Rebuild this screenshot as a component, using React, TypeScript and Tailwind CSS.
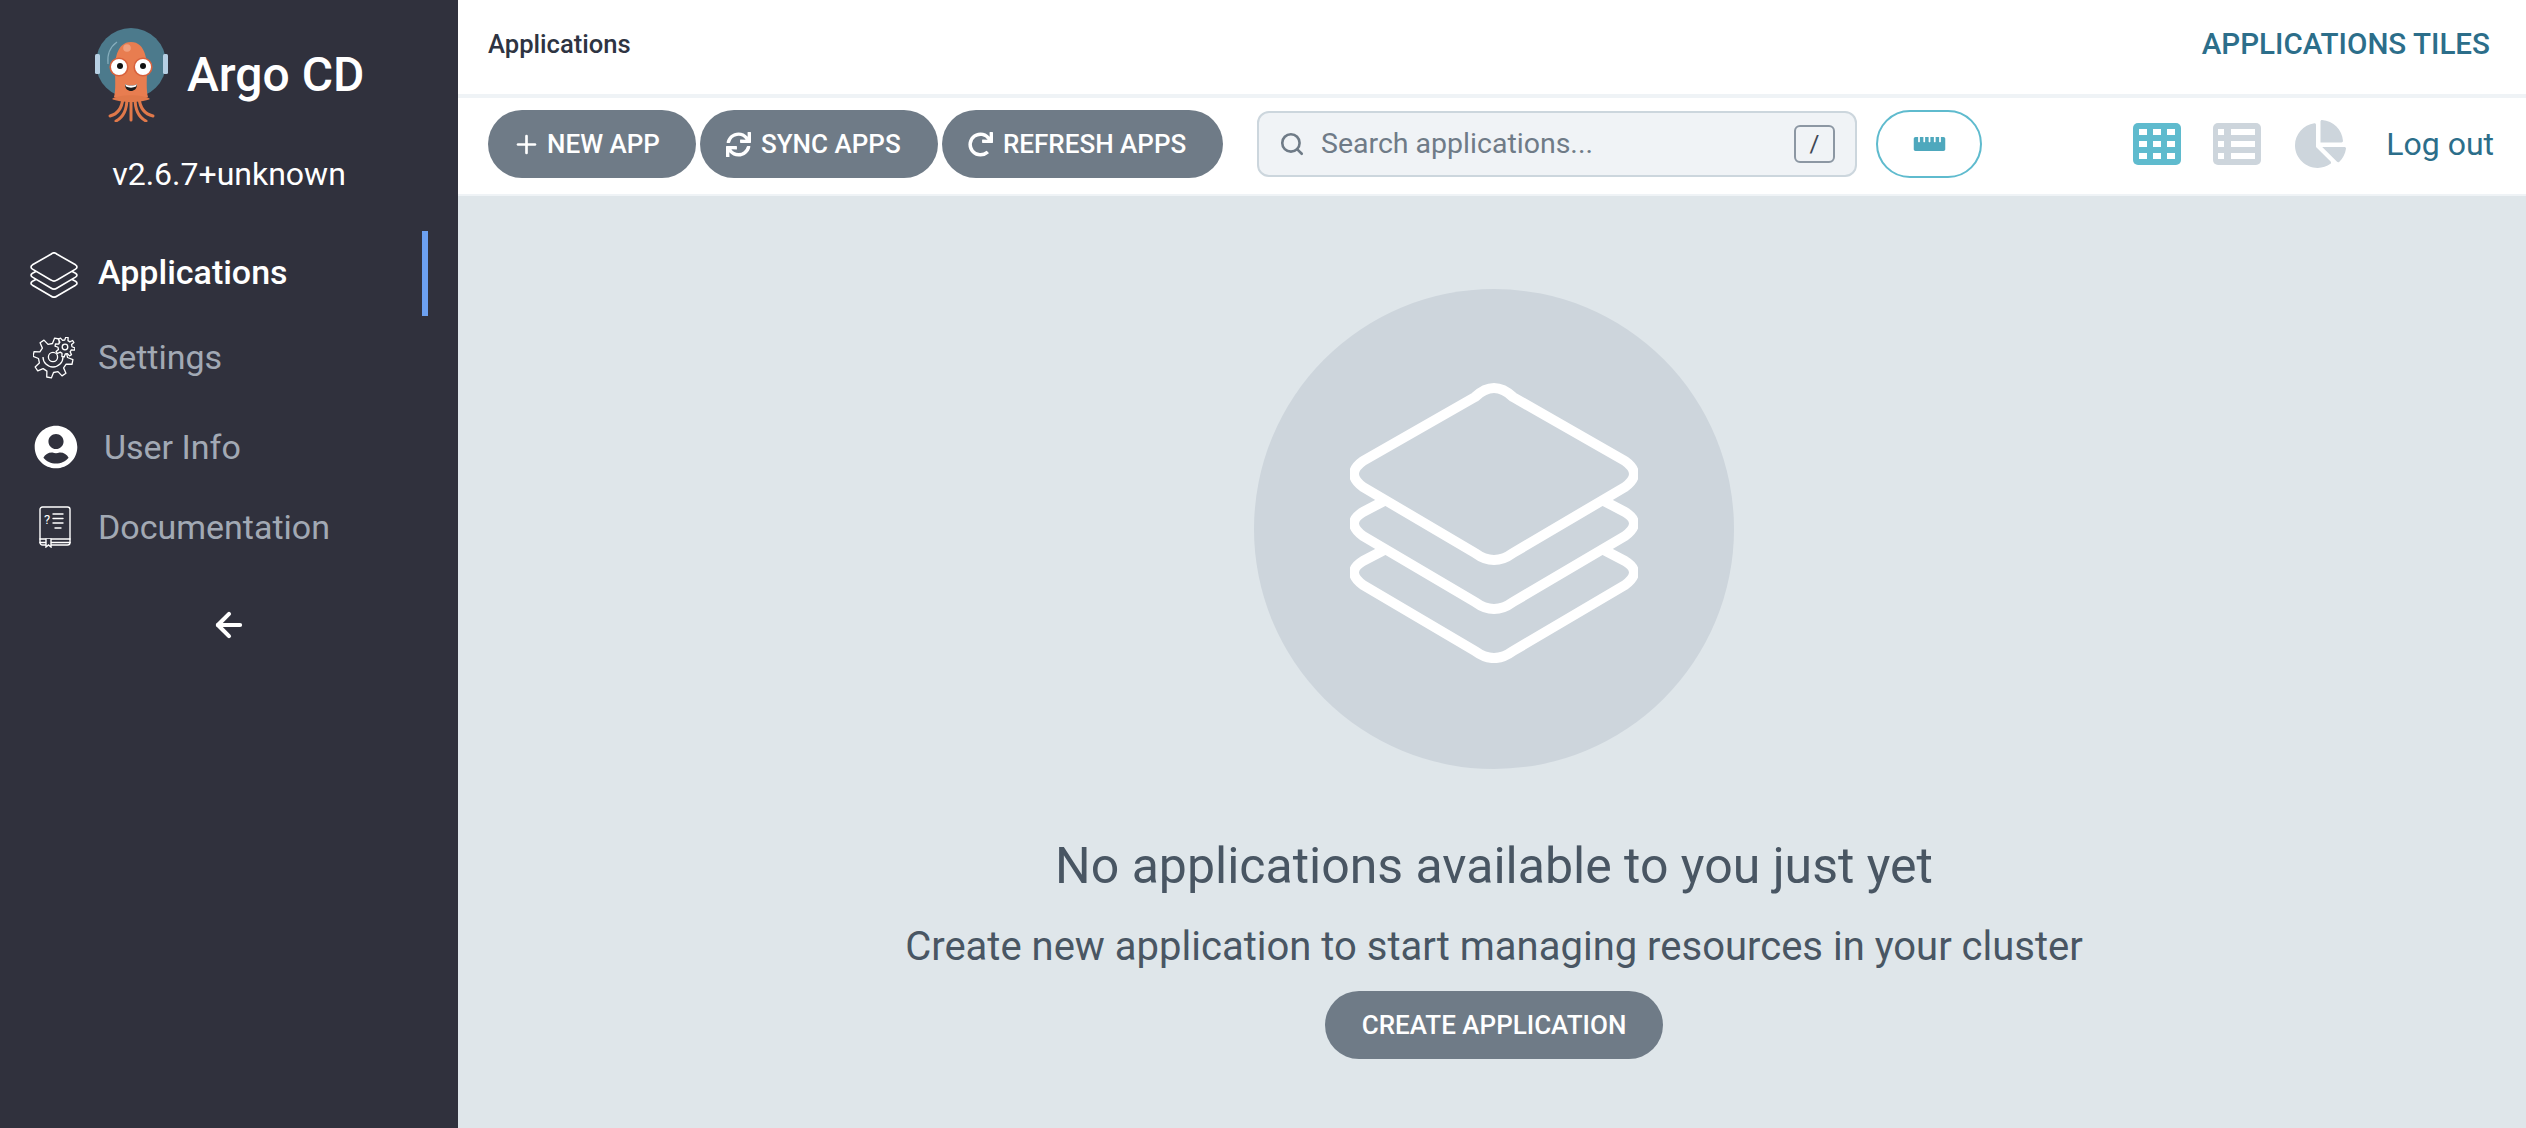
import { Plus, Search, ArrowLeft } from "lucide-react";
import { FaUserCircle, FaRulerHorizontal, FaChartPie, FaSync, FaRedo } from "react-icons/fa";

const StackIcon = ({ className, strokeWidth }: { className: string; strokeWidth: number }) => (
  <svg viewBox="0 0 288 280" fill="none" stroke="currentColor" strokeWidth={strokeWidth} strokeLinejoin="round" className={className}>
    <path d="M125 14Q144 -4 163 14L275 78Q293 91 275 104L163 170Q144 184 125 170L13 104Q-5 91 13 78Z" />
    <path d="M36 117L13 129Q-5 140 13 153L125 219Q144 233 163 219L275 153Q293 140 275 129L252 117" />
    <path d="M36 166L13 178Q-5 189 13 202L125 268Q144 282 163 268L275 202Q293 189 275 178L252 166" />
  </svg>
);

const gearPath = (cx: number, cy: number, r1: number, r2: number, teeth: number) => {
  const pts: string[] = [];
  for (let i = 0; i < teeth; i++) {
    const a = (i / teeth) * Math.PI * 2 + 0.2;
    const w = (Math.PI * 2) / teeth;
    const list: [number, number][] = [
      [r2, a - w * 0.3],
      [r1, a - w * 0.15],
      [r1, a + w * 0.15],
      [r2, a + w * 0.3],
    ];
    list.forEach(([r, t]) => pts.push(`${(cx + r * Math.cos(t)).toFixed(2)} ${(cy + r * Math.sin(t)).toFixed(2)}`));
  }
  return "M" + pts.join("L") + "Z";
};

const GearIcon = () => (
  <svg viewBox="0 0 42 42" fill="none" stroke="white" strokeWidth="1.3" strokeLinejoin="round" className="w-[42px] h-[42px]">
    <path d={gearPath(20, 21, 20, 14.5, 8)} />
    <circle cx="20" cy="20" r="4.6" />
    <path d="M10 20A10 10 0 0 0 30 20" />
    <path d={gearPath(32, 10, 10, 7, 8)} fill="#30313d" />
    <circle cx="32" cy="10" r="2.8" />
  </svg>
);

const DocIcon = () => (
  <svg viewBox="0 0 32 42" fill="none" stroke="white" strokeWidth="1.4" strokeLinecap="round" className="w-[32px] h-[42px]">
    <rect x="1" y="1" width="30" height="38" rx="2.5" />
    <path d="M1 33H31M1 36.5H31M14 8H24M14 12.5H24M14 17H24M16 22H22" />
    <path d="M7 33V41L9.5 39L12 41V33" fill="#30313d" />
    <text x="5" y="18" fontSize="13" fill="white" stroke="none" fontFamily="Roboto, sans-serif">?</text>
  </svg>
);

const Logo = () => (
  <svg viewBox="95 28 73 94" className="w-[73px] h-[94px]">
    <circle cx="131" cy="63" r="35" fill="#4c7a8c" />
    <rect x="95" y="54" width="5" height="20" rx="1.5" fill="#b6cfe3" />
    <rect x="163" y="54" width="5" height="20" rx="1.5" fill="#b6cfe3" />
    <path d="M108 64C107 55 110 47 117 42" fill="none" stroke="#86aebd" strokeWidth="1.2" />
    <g fill="none" stroke="#e0784a" strokeWidth="3" strokeLinecap="round">
      <path d="M123 98C122 108 118 114 110 116" />
      <path d="M127 98C127 110 124 117 116 121" />
      <path d="M131 98V120" />
      <path d="M135 98C135 110 138 117 146 121" />
      <path d="M139 98C140 108 144 114 153 116" />
    </g>
    <path d="M115 68C115 62 116 42 131 42C146 42 147 62 147 68C147 78 146 90 148 97C142 100 120 100 114 97C116 90 115 78 115 68Z" fill="#e87d50" />
    <path d="M112 99C118 94 144 94 150 99C142 103 120 103 112 99Z" fill="#e0784a" />
    <circle cx="127" cy="48" r="3.8" fill="#f0a07e" />
    <circle cx="119" cy="67" r="8.8" fill="white" stroke="#d8613c" strokeWidth="1.6" />
    <circle cx="143" cy="67" r="8.8" fill="white" stroke="#d8613c" strokeWidth="1.6" />
    <circle cx="120" cy="66" r="3" fill="#111" />
    <circle cx="143" cy="66" r="3" fill="#111" />
    <path d="M125 84C128 86 134 86 137 84C137 89 134 91 131 91C128 91 125 89 125 84Z" fill="#1c1c1c" />
    <path d="M125 84C128 86 134 86 137 84L136 86.5C133 88 129 88 126 86.5Z" fill="white" />
  </svg>
);

const GridIcon = () => (
  <svg viewBox="0 0 48 42" className="w-[48px] h-[42px]">
    <rect width="48" height="42" rx="5" fill="#5fbbce" />
    {[6, 18, 30].map((y) =>
      [6, 20, 34].map((x) => <rect key={`${x}-${y}`} x={x} y={y} width="8" height="6" fill="white" />)
    )}
  </svg>
);

const ListIcon = () => (
  <svg viewBox="0 0 48 42" className="w-[48px] h-[42px]">
    <rect width="48" height="42" rx="5" fill="#cdd5dc" />
    {[6, 18, 30].map((y) => (
      <g key={y}>
        <rect x="5" y={y} width="6" height="6" fill="white" />
        <rect x="18" y={y} width="24" height="6" fill="white" />
      </g>
    ))}
  </svg>
);

const PillButton = ({ icon, label, className }: { icon?: React.ReactNode; label: string; className: string }) => (
  <button className={`h-[68px] rounded-[34px] bg-[#6f7b87] text-white text-[26px] font-medium flex items-center ${className}`}>
    {icon}
    {label}
  </button>
);

export default function App() {
  return (
    <div className="w-[2526px] h-[1128px] flex overflow-hidden font-['Roboto',sans-serif] bg-[#dfe6ea]">
      <aside className="w-[458px] h-full bg-[#30313d] shrink-0 text-white">
        <div className="pt-[28px] pl-[95px] flex items-center h-[122px]">
          <Logo />
          <span className="ml-[19px] text-[48px] font-medium leading-none">Argo CD</span>
        </div>
        <div className="h-[109px] flex items-center justify-center pb-[6px] text-[32px]">v2.6.7+unknown</div>
        <nav>
          <div className="h-[85px] flex items-center relative">
            <div className="w-[98px] pl-[30px] pt-[2px]"><StackIcon className="w-[48px] h-[46px]" strokeWidth={10} /></div>
            <span className="text-[34px] font-medium pb-[2px]">Applications</span>
            <div className="absolute left-[422px] top-0 w-[6px] h-full bg-[#6ca0f0]" />
          </div>
          <div className="h-[84px] flex items-center text-[#a2a9b4]">
            <div className="w-[98px] pl-[33px]"><GearIcon /></div>
            <span className="text-[34px] pb-[1px]">Settings</span>
          </div>
          <div className="h-[94px] flex items-center text-[#a2a9b4]">
            <div className="w-[104px] pl-[34px]"><FaUserCircle className="w-[44px] h-[44px] text-white" /></div>
            <span className="text-[34px]">User Info</span>
          </div>
          <div className="h-[66px] flex items-center text-[#a2a9b4]">
            <div className="w-[98px] pl-[39px]"><DocIcon /></div>
            <span className="text-[34px]">Documentation</span>
          </div>
          <div className="h-[130px] flex items-center justify-center">
            <ArrowLeft className="w-[38px] h-[38px]" strokeWidth={2.6} />
          </div>
        </nav>
      </aside>

      <main className="flex-1 flex flex-col min-w-0">
        <header className="h-[98px] bg-white border-b-4 border-[#eff3f6] flex items-center justify-between pl-[30px] pr-[36px] pb-[6px]">
          <span className="text-[25.6px] font-medium text-[#2e3442]">Applications</span>
          <span className="text-[29.6px] font-medium text-[#2c6e8a]">APPLICATIONS TILES</span>
        </header>

        <div className="h-[98px] bg-white border-b-2 border-[#eff3f6] flex items-center pl-[30px] pr-[32px] pb-[4px]">
          <div className="flex gap-[4px]">
            <PillButton className="w-[208px] pl-[24px]" icon={<Plus className="w-[29px] h-[29px] mr-[6px]" strokeWidth={2.2} />} label="NEW APP" />
            <PillButton className="w-[238px] pl-[26px]" icon={<FaSync className="w-[25px] h-[25px] mr-[10px]" />} label="SYNC APPS" />
            <PillButton className="w-[281px] pl-[26px]" icon={<FaRedo className="w-[25px] h-[25px] mr-[10px]" />} label="REFRESH APPS" />
          </div>
          <div className="ml-[34px] w-[600px] h-[66px] rounded-[12px] border-2 border-[#ccd6dd] bg-[#f0f3f6] flex items-center pl-[20px] pr-[20px]">
            <Search className="w-[26px] h-[26px] text-[#6f7b87] mr-[16px]" strokeWidth={2.4} />
            <span className="text-[28.5px] text-[#6f7b87] flex-1">Search applications...</span>
            <div className="w-[41px] h-[38px] rounded-[6px] border-2 border-[#8c97a3] flex items-center justify-center text-[24px] text-[#3f4854]">/</div>
          </div>
          <button className="ml-[19px] w-[106px] h-[68px] rounded-[34px] border-2 border-[#5fbbce] flex items-center justify-center">
            <FaRulerHorizontal className="w-[33px] h-[28px] text-[#4ea8bd]" />
          </button>
          <div className="ml-auto flex items-center">
            <GridIcon />
            <div className="ml-[32px]"><ListIcon /></div>
            <FaChartPie className="ml-[33px] w-[53px] h-[48px] text-[#cdd5dc]" />
            <span className="ml-[39px] text-[32px] text-[#2c6e8a]">Log out</span>
          </div>
        </div>

        <section className="flex-1 flex flex-col items-center pt-[93px] pl-[4px] text-[#495663]">
          <div className="w-[480px] h-[480px] rounded-full bg-[#cdd5dc] flex items-center justify-center pb-[13px] text-white">
            <StackIcon className="w-[288px] h-[280px]" strokeWidth={10} />
          </div>
          <h1 className="mt-[67px] text-[50px] leading-[60px] font-normal">No applications available to you just yet</h1>
          <p className="mt-[26px] text-[40px] leading-[50px]">Create new application to start managing resources in your cluster</p>
          <PillButton className="mt-[19px] w-[338px] justify-center" label="CREATE APPLICATION" />
        </section>
      </main>
    </div>
  );
}
